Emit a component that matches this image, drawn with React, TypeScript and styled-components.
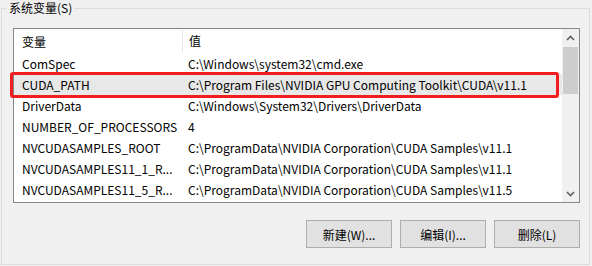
import styled, { createGlobalStyle } from "styled-components";

const GlobalStyle = createGlobalStyle`
  html, body {
    margin: 0;
    padding: 0;
    background: #f0f0f0;
  }
  body {
    font-family: "Noto Sans CJK SC", "Noto Sans", sans-serif;
    font-size: 12px;
    color: #000;
  }
`;

const rows = [
  { name: "ComSpec", value: "C:\\Windows\\system32\\cmd.exe" },
  { name: "CUDA_PATH", value: "C:\\Program Files\\NVIDIA GPU Computing Toolkit\\CUDA\\v11.1", selected: true },
  { name: "DriverData", value: "C:\\Windows\\System32\\Drivers\\DriverData" },
  { name: "NUMBER_OF_PROCESSORS", value: "4" },
  { name: "NVCUDASAMPLES_ROOT", value: "C:\\ProgramData\\NVIDIA Corporation\\CUDA Samples\\v11.1" },
  { name: "NVCUDASAMPLES11_1_R...", value: "C:\\ProgramData\\NVIDIA Corporation\\CUDA Samples\\v11.1" },
  { name: "NVCUDASAMPLES11_5_R...", value: "C:\\ProgramData\\NVIDIA Corporation\\CUDA Samples\\v11.5" },
];

const App = () => {
  return (
    <>
      <GlobalStyle />
      <Group>
        <Legend>系统变量(S)</Legend>
        <ListBox>
          <Table>
            <HeaderRow>
              <Cell>变量</Cell>
              <HeaderValue>值</HeaderValue>
            </HeaderRow>
            {rows.map((r) => (
              <Row key={r.name} $selected={!!r.selected}>
                <Cell>{r.name}</Cell>
                <ValueCell>{r.value}</ValueCell>
              </Row>
            ))}
          </Table>
          <ScrollBar>
            <Arrow>
              <svg width="9" height="6" viewBox="0 0 9 6">
                <path d="M1 5 L4.5 1.5 L8 5" fill="none" stroke="#606060" strokeWidth="1.6" />
              </svg>
            </Arrow>
            <Track>
              <Thumb />
            </Track>
            <Arrow>
              <svg width="9" height="6" viewBox="0 0 9 6">
                <path d="M1 1 L4.5 4.5 L8 1" fill="none" stroke="#606060" strokeWidth="1.6" />
              </svg>
            </Arrow>
          </ScrollBar>
          <Highlight />
        </ListBox>
        <ButtonRow>
          <Button>新建(W)...</Button>
          <Button>编辑(I)...</Button>
          <Button>删除(L)</Button>
        </ButtonRow>
      </Group>
    </>
  );
};

export default App;

const Group = styled.div`
  position: relative;
  box-sizing: border-box;
  margin: 8px 2px 0 1px;
  height: 257px;
  border: 1px solid #dcdcdc;
  padding: 19px 9px 0 11px;
`;

const Legend = styled.div`
  position: absolute;
  top: -10px;
  left: 5px;
  padding: 0 2px;
  background: #f0f0f0;
  line-height: 18px;
`;

const ListBox = styled.div`
  position: relative;
  box-sizing: border-box;
  height: 175px;
  border: 1px solid #828790;
  background: #fff;
  display: flex;
`;

const Table = styled.div`
  flex: 1;
  min-width: 0;
  display: flex;
  flex-direction: column;
  padding-top: 1px;
`;

const HeaderRow = styled.div`
  display: grid;
  grid-template-columns: 168px 1fr;
  height: 22px;
  align-items: center;
  margin-bottom: 1px;
`;

const Row = styled.div<{ $selected: boolean }>`
  display: grid;
  grid-template-columns: 168px 1fr;
  height: 21px;
  align-items: center;
  background: ${({ $selected }) => ($selected ? "#e8e8e8" : "transparent")};
`;

const Cell = styled.div`
  padding-left: 8px;
  white-space: nowrap;
  overflow: hidden;
`;

const ValueCell = styled.div`
  padding-left: 6px;
  white-space: nowrap;
  overflow: hidden;
`;

const HeaderValue = styled(ValueCell)`
  border-left: 1px solid #e5e5e5;
  height: 22px;
  line-height: 22px;
  padding-left: 6px;
`;

const ScrollBar = styled.div`
  width: 17px;
  background: #f0f0f0;
  display: flex;
  flex-direction: column;
`;

const Arrow = styled.div`
  height: 17px;
  display: flex;
  align-items: center;
  justify-content: center;
`;

const Track = styled.div`
  flex: 1;
  padding: 1px 1px 0;
`;

const Thumb = styled.div`
  height: 47px;
  background: #cdcdcd;
`;

const Highlight = styled.div`
  position: absolute;
  left: -4px;
  top: 43px;
  width: 549px;
  height: 26px;
  box-sizing: border-box;
  border: 3px solid #f21d1d;
  border-radius: 3px;
  pointer-events: none;
`;

const ButtonRow = styled.div`
  display: flex;
  justify-content: flex-end;
  gap: 8px;
  margin-top: 17px;
`;

const Button = styled.button`
  box-sizing: border-box;
  width: 86px;
  height: 28px;
  background: #e1e1e1;
  border: 1px solid #adadad;
  font-family: "Noto Sans CJK SC", "Noto Sans", sans-serif;
  font-size: 12px;
  color: #000;
  padding: 0;
`;
